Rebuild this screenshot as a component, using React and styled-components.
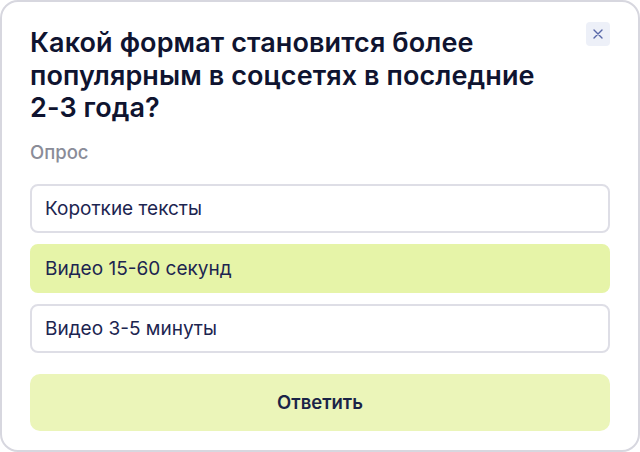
import React, { useState } from "react";
import styled, { createGlobalStyle } from "styled-components";

const GlobalStyle = createGlobalStyle`
    * { box-sizing: border-box; }
    body {
        margin: 0;
        background: #ffffff;
        font-family: Inter, "Noto Sans", sans-serif;
    }
`;

const Card = styled.div`
    width: 640px;
    height: 452px;
    border: 2px solid #d7d7df;
    border-radius: 18px;
    background: #ffffff;
    padding: 25px 28px 0 28px;
    display: flex;
    flex-direction: column;
`;

const Header = styled.div`
    display: flex;
    justify-content: space-between;
    align-items: flex-start;
`;

const Title = styled.h2`
    margin: 0;
    font-size: 27px;
    line-height: 32.5px;
    font-weight: 600;
    color: #0f1430;
    letter-spacing: 0.1px;
    max-width: 545px;
`;

const NoWrap = styled.span`
    white-space: nowrap;
`;

const CloseButton = styled.button`
    width: 24px;
    height: 24px;
    border: none;
    border-radius: 4px;
    background: #edf0f8;
    display: flex;
    align-items: center;
    justify-content: center;
    padding: 0;
    margin-top: -5px;
    cursor: pointer;
`;

const Caption = styled.div`
    margin-top: 15px;
    font-size: 18.5px;
    line-height: 24px;
    font-weight: 500;
    color: #8a8c98;
`;

const Options = styled.div`
    margin-top: 20px;
    display: flex;
    flex-direction: column;
    gap: 11px;
`;

const Option = styled.div`
    height: 49px;
    border-radius: 8px;
    border: 2px solid ${p => (p.$selected ? "#e6f4a8" : "#dedee6")};
    background: ${p => (p.$selected ? "#e6f4a8" : "#ffffff")};
    display: flex;
    align-items: center;
    padding: 0 13px;
    font-size: 19px;
    color: #1c2550;
    cursor: pointer;
`;

const Submit = styled.button`
    margin-top: 21px;
    height: 57px;
    border: none;
    border-radius: 10px;
    background: #ebf5b9;
    font-family: Inter, "Noto Sans", sans-serif;
    font-size: 18.5px;
    font-weight: 600;
    color: #1a2347;
    cursor: pointer;
`;

const options = ["Короткие тексты", "Видео 15-60 секунд", "Видео 3-5 минуты"];

export default function App() {
    const [selected, setSelected] = useState(1);
    return (
        <>
            <GlobalStyle />
            <Card>
                <Header>
                    <Title>
                        Какой формат становится более популярным в соцсетях в последние{" "}
                        <NoWrap>2-3 года?</NoWrap>
                    </Title>
                    <CloseButton aria-label="Закрыть">
                        <svg width="12" height="12" viewBox="0 0 12 12">
                            <path d="M2 2L10 10M10 2L2 10" stroke="#5867a8" strokeWidth="1.4" strokeLinecap="round" />
                        </svg>
                    </CloseButton>
                </Header>
                <Caption>Опрос</Caption>
                <Options>
                    {options.map((o, i) => (
                        <Option key={o} $selected={i === selected} onClick={() => setSelected(i)}>
                            {o}
                        </Option>
                    ))}
                </Options>
                <Submit>Ответить</Submit>
            </Card>
        </>
    );
}
